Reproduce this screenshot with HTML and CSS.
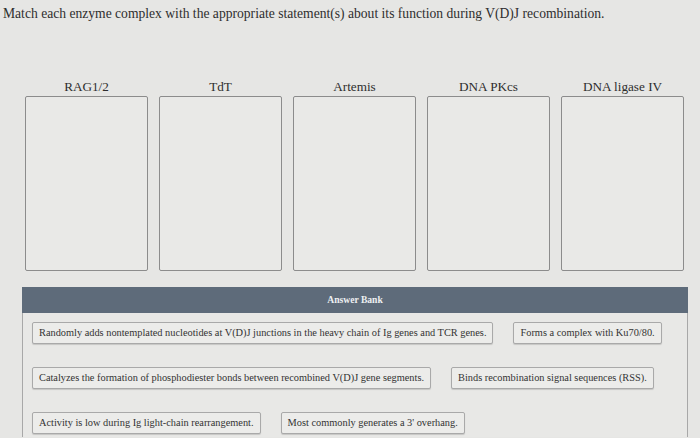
FILE: index.html
```html
<!DOCTYPE html>
<html lang="en">
<head>
    <meta charset="UTF-8">
    <meta name="viewport" content="width=device-width, initial-scale=1.0">
    <title>V(D)J recombination - matching</title>
    <link rel="stylesheet" href="styles.css">
</head>
<body>
    <div class="page">
        <p class="prompt">Match each enzyme complex with the appropriate statement(s) about its function during V(D)J recombination.</p>

        <div class="targets">
            <div class="target">
                <div class="target-label">RAG1/2</div>
                <div class="drop"></div>
            </div>
            <div class="target">
                <div class="target-label">TdT</div>
                <div class="drop"></div>
            </div>
            <div class="target">
                <div class="target-label">Artemis</div>
                <div class="drop"></div>
            </div>
            <div class="target">
                <div class="target-label">DNA PKcs</div>
                <div class="drop"></div>
            </div>
            <div class="target">
                <div class="target-label">DNA ligase IV</div>
                <div class="drop"></div>
            </div>
        </div>

        <div class="bank">
            <div class="bank-header">Answer Bank</div>
            <div class="bank-body">
                <div class="bank-row">
                    <span class="chip">Randomly adds nontemplated nucleotides at V(D)J junctions in the heavy chain of Ig genes and TCR genes.</span>
                    <span class="chip">Forms a complex with Ku70/80.</span>
                </div>
                <div class="bank-row">
                    <span class="chip">Catalyzes the formation of phosphodiester bonds between recombined V(D)J gene segments.</span>
                    <span class="chip">Binds recombination signal sequences (RSS).</span>
                </div>
                <div class="bank-row">
                    <span class="chip">Activity is low during Ig light-chain rearrangement.</span>
                    <span class="chip">Most commonly generates a 3' overhang.</span>
                </div>
            </div>
        </div>
    </div>
</body>
</html>
```

FILE: styles.css
```css
body {
    margin: 0;
    background-color: #e6e6e4;
    font-family: "Liberation Serif", "Times New Roman", serif;
    color: #2e2e2e;
    overflow: hidden;
}
.page {
    width: 700px;
    height: 438px;
    overflow: hidden;
}
.prompt {
    margin: 0;
    padding: 6px 0 0 3px;
    font-size: 13.6px;
    line-height: 16px;
}
.targets {
    display: grid;
    grid-template-columns: repeat(5, 123px);
    column-gap: 11px;
    margin: 57px 0 0 25px;
}
.target-label {
    text-align: center;
    font-size: 13.2px;
    line-height: 16px;
    height: 17px;
}
.drop {
    height: 173px;
    border: 1.5px solid #8c8c8c;
    border-radius: 2px;
    background-color: #e9e9e7;
}
.bank {
    width: 666px;
    margin: 16px 0 0 22px;
}
.bank-header {
    height: 26px;
    line-height: 26px;
    background-color: #5e6b7a;
    color: #eef0f2;
    text-align: center;
    font-size: 9.6px;
    font-weight: bold;
}
.bank-body {
    box-sizing: border-box;
    height: 124px;
    border-left: 1px solid #a8a8a8;
    border-right: 1px solid #a8a8a8;
    background-color: #e8e8e6;
    padding: 9px 0 0 9px;
}
.bank-row {
    display: flex;
    column-gap: 20px;
    margin-bottom: 23px;
}
.chip {
    display: inline-block;
    font-size: 10.35px;
    line-height: 20px;
    padding: 0 6px;
    border: 1px solid #a9a9a9;
    border-radius: 2px;
    background-color: #ececea;
    box-shadow: 0 1px 1px rgba(0,0,0,0.15);
    color: #333;
    white-space: nowrap;
}
```
